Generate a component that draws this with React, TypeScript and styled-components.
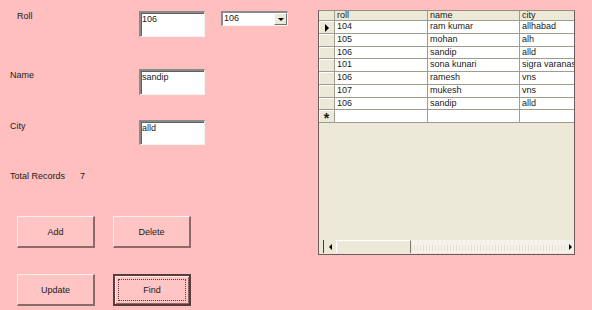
import React from 'react';
import styled, { createGlobalStyle } from 'styled-components';

const Global = createGlobalStyle`
  html, body { margin: 0; padding: 0; background: #ffbfbf; }
  body { font-family: "Liberation Sans", Arial, sans-serif; font-size: 9px; color: #1a1a1a; }
  * { box-sizing: border-box; }
`;

const Page = styled.div`
  width: 592px;
  height: 310px;
  display: flex;
  background: #ffbfbf;
  overflow: hidden;
`;

const FormPane = styled.div`
  width: 318px;
  display: flex;
  flex-direction: column;
  padding-top: 11px;
`;

const FieldRow = styled.div<{ $mt: number; $h: number }>`
  display: grid;
  grid-template-columns: 139px 66px 16px 67px;
  margin-top: ${(p) => p.$mt}px;
  height: ${(p) => p.$h}px;
`;

const Label = styled.div<{ $indent: number; $top: number }>`
  padding-left: ${(p) => p.$indent}px;
  padding-top: ${(p) => p.$top}px;
  line-height: 11px;
`;

const TextBox = styled.div`
  background: #fff;
  border-style: solid;
  border-width: 2px 1px 1px 2px;
  border-color: #8a8a8a #f4f4f4 #f4f4f4 #8a8a8a;
  box-shadow: inset 1px 1px 0 #606060;
  padding: 1px 0 0 1px;
  line-height: 10px;
  height: 100%;
`;

const Combo = styled.div`
  grid-column: 4;
  height: 15px;
  background: #fff;
  border-style: solid;
  border-width: 2px 1px 1px 2px;
  border-color: #8a8a8a #f4f4f4 #f4f4f4 #8a8a8a;
  display: flex;
  align-items: stretch;
  justify-content: space-between;
  padding-left: 1px;
  line-height: 10px;
`;

const ComboButton = styled.div`
  width: 13px;
  background: #ece9d8;
  border-style: solid;
  border-width: 1px;
  border-color: #fff #707070 #707070 #fff;
  display: flex;
  align-items: center;
  justify-content: center;
`;

const DownArrow = styled.div`
  width: 0;
  height: 0;
  border-left: 3px solid transparent;
  border-right: 3px solid transparent;
  border-top: 3px solid #000;
`;

const TotalRow = styled.div`
  display: flex;
  margin-top: 26px;
  padding-left: 10px;
  line-height: 11px;
  gap: 15px;
`;

const ButtonRow = styled.div<{ $mt: number }>`
  display: flex;
  gap: 18px;
  padding-left: 17px;
  margin-top: ${(p) => p.$mt}px;
`;

const Button = styled.div<{ $focused?: boolean }>`
  position: relative;
  width: 78px;
  height: 32px;
  background: #ffc4c4;
  display: flex;
  align-items: center;
  justify-content: center;
  border-style: solid;
  border-width: 1px 2px 2px 1px;
  border-color: #fff0f0 #8a6a6a #8a6a6a #fff0f0;
  ${(p) =>
    p.$focused &&
    `
    border: 2px solid #5a3a3a;
    box-shadow: inset 1px 1px 0 #fff0f0, inset -1px -1px 0 #8a6a6a;
  `}
`;

const FocusRect = styled.div`
  position: absolute;
  inset: 3px;
  border: 1px dotted #5a3a3a;
`;

const GridPane = styled.div`
  margin-top: 10px;
  width: 257px;
  height: 245px;
  border: 1px solid #6e5a5a;
  border-top-color: #9a8a80;
  background: #ece9d8;
  display: flex;
  flex-direction: column;
  overflow: hidden;
`;

const Table = styled.div`
  display: grid;
  grid-template-columns: 16px 93px 92px 60px;
`;

const HeadCell = styled.div`
  height: 10px;
  background: #ece9d8;
  border-right: 1px solid #a09c8c;
  border-bottom: 1px solid #a09c8c;
  padding-left: 2px;
  line-height: 9px;
  white-space: nowrap;
  overflow: hidden;
`;

const RowHead = styled.div`
  height: 12.75px;
  background: #ece9d8;
  border-right: 1px solid #a09c8c;
  border-bottom: 1px solid #a09c8c;
  box-shadow: inset 1px 1px 0 #fff;
  display: flex;
  align-items: center;
  justify-content: center;
  font-size: 14px;
  font-weight: bold;
  line-height: 12px;
  padding-top: 3px;
`;

const Cell = styled.div`
  height: 12.75px;
  background: #fff;
  border-right: 1px solid #a09c8c;
  border-bottom: 1px solid #a09c8c;
  padding-left: 2px;
  line-height: 11px;
  white-space: nowrap;
  overflow: hidden;
`;

const RightArrowMark = styled.div<{ $size: number }>`
  width: 0;
  height: 0;
  border-top: ${(p) => p.$size}px solid transparent;
  border-bottom: ${(p) => p.$size}px solid transparent;
  border-left: ${(p) => p.$size}px solid #000;
`;

const LeftArrowMark = styled.div`
  width: 0;
  height: 0;
  border-top: 3px solid transparent;
  border-bottom: 3px solid transparent;
  border-right: 3px solid #000;
`;

const Filler = styled.div`
  flex: 1;
`;

const ScrollBar = styled.div`
  height: 13px;
  display: flex;
  padding-left: 4px;
  margin-bottom: 1px;
`;

const ScrollButton = styled.div<{ $w: number }>`
  width: ${(p) => p.$w}px;
  background: #ece9d8;
  border-left: 1px solid #404040;
  display: flex;
  align-items: center;
  justify-content: center;
`;

const EndButton = styled.div`
  width: 8px;
  background: #f2f0e8;
  display: flex;
  align-items: center;
  justify-content: center;
`;

const Thumb = styled.div`
  width: 75px;
  background: #ece9d8;
  border-top: 1px solid #fff;
  border-left: 1px solid #fff;
  border-right: 1px solid #807868;
`;

const Track = styled.div`
  flex: 1;
  background-color: #f4f2eb;
  background-image: repeating-linear-gradient(90deg, #e4e0d4 0 1px, transparent 1px 3px);
  background-size: 100% 6px;
  background-repeat: no-repeat;
  background-position: 0 5px;
`;

const rows = [
  ['104', 'ram kumar', 'allhabad'],
  ['105', 'mohan', 'alh'],
  ['106', 'sandip', 'alld'],
  ['101', 'sona kunari', 'sigra varanasi'],
  ['106', 'ramesh', 'vns'],
  ['107', 'mukesh', 'vns'],
  ['106', 'sandip', 'alld'],
];

export default function App() {
  return (
    <Page>
      <Global />
      <FormPane>
        <FieldRow $mt={0} $h={26}>
          <Label $indent={17} $top={0}>Roll</Label>
          <TextBox>106</TextBox>
          <Combo>
            <span>106</span>
            <ComboButton>
              <DownArrow />
            </ComboButton>
          </Combo>
        </FieldRow>
        <FieldRow $mt={32} $h={26}>
          <Label $indent={10} $top={1}>Name</Label>
          <TextBox>sandip</TextBox>
        </FieldRow>
        <FieldRow $mt={25} $h={25}>
          <Label $indent={10} $top={1}>City</Label>
          <TextBox>alld</TextBox>
        </FieldRow>
        <TotalRow>
          <span>Total Records</span>
          <span>7</span>
        </TotalRow>
        <ButtonRow $mt={34}>
          <Button>Add</Button>
          <Button>Delete</Button>
        </ButtonRow>
        <ButtonRow $mt={26}>
          <Button>Update</Button>
          <Button $focused>
            <FocusRect />
            Find
          </Button>
        </ButtonRow>
      </FormPane>
      <GridPane>
        <Table>
          <HeadCell />
          <HeadCell>roll</HeadCell>
          <HeadCell>name</HeadCell>
          <HeadCell>city</HeadCell>
          {rows.map((r, i) => (
            <React.Fragment key={i}>
              <RowHead>{i === 0 && <RightArrowMark $size={4} />}</RowHead>
              <Cell>{r[0]}</Cell>
              <Cell>{r[1]}</Cell>
              <Cell>{r[2]}</Cell>
            </React.Fragment>
          ))}
          <RowHead>*</RowHead>
          <Cell />
          <Cell />
          <Cell />
        </Table>
        <Filler />
        <ScrollBar>
          <ScrollButton $w={13}>
            <LeftArrowMark />
          </ScrollButton>
          <Thumb />
          <Track />
          <EndButton>
            <RightArrowMark $size={3} />
          </EndButton>
        </ScrollBar>
      </GridPane>
    </Page>
  );
}
